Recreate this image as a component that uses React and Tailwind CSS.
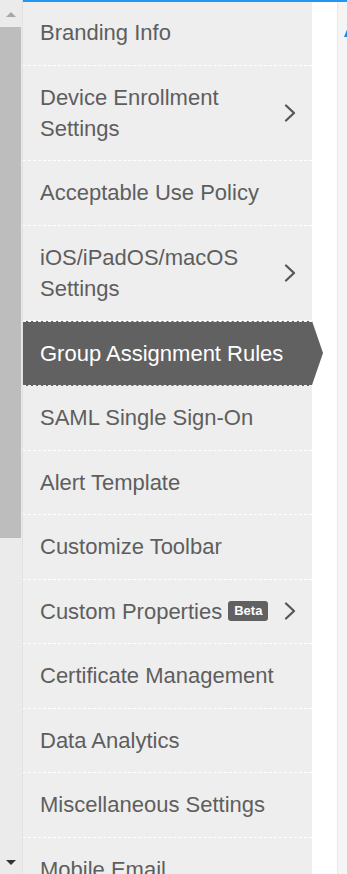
const items = [
  { label: 'Branding Info' },
  { label: ['Device Enrollment', 'Settings'], more: true },
  { label: 'Acceptable Use Policy' },
  { label: ['iOS/iPadOS/macOS', 'Settings'], more: true },
  { label: 'Group Assignment Rules', active: true },
  { label: 'SAML Single Sign-On' },
  { label: 'Alert Template' },
  { label: 'Customize Toolbar' },
  { label: 'Custom Properties', beta: true, more: true },
  { label: 'Certificate Management' },
  { label: 'Data Analytics' },
  { label: 'Miscellaneous Settings' },
  { label: 'Mobile Email' },
];

function Chevron() {
  return (
    <svg width="12" height="18" viewBox="0 0 12 18" className="shrink-0">
      <polyline points="2,1.5 10,9 2,16.5" fill="none" stroke="#555" strokeWidth="2.2" strokeLinecap="round" strokeLinejoin="round" />
    </svg>
  );
}

function MenuRow({ item }) {
  const lines = Array.isArray(item.label) ? item.label : [item.label];
  if (item.active) {
    return (
      <div className="relative flex items-center h-[65px] bg-[#616161] text-white pl-[17px] pr-4 leading-[31px] border-y border-dashed border-[#f4f4f4]">
        <span>{item.label}</span>
        <span className="absolute right-[-11px] top-[-1px] w-0 h-0 border-y-[32.5px] border-y-transparent border-l-[11px] border-l-[#616161]" />
      </div>
    );
  }
  return (
    <div className="flex items-center justify-between pl-[17px] pr-[16px] py-[16.25px] leading-[31px] border-b border-dashed border-white text-[#5e5e5e]">
      <div className="flex items-center">
        <div>
          {lines.map(l => <div key={l}>{l}</div>)}
        </div>
        {item.beta && (
          <span className="ml-[6px] px-[6px] rounded-[3px] bg-[#616161] text-white text-[13px] font-bold leading-[20px]">Beta</span>
        )}
      </div>
      {item.more && <Chevron />}
    </div>
  );
}

export default function App() {
  return (
    <div className="relative flex w-[347px] h-[874px] overflow-hidden bg-white text-[22px]" style={{ fontFamily: '"Liberation Sans", Arial, sans-serif' }}>
      {/* scrollbar */}
      <div className="relative w-[23px] shrink-0 bg-[#ebebeb] border-r border-dotted border-[#d8d8d8]">
        <div className="absolute left-[6px] top-[12px] w-0 h-0 border-x-[5px] border-x-transparent border-b-[5px] border-b-[#a8a8a8]" />
        <div className="absolute left-0 top-[27px] w-[21px] h-[511px] bg-[#bdbdbd]" />
        <div className="absolute left-[6px] top-[860px] w-0 h-0 border-x-[5px] border-x-transparent border-t-[5px] border-t-[#333]" />
      </div>
      {/* menu */}
      <div className="w-[289px] shrink-0 bg-[#eeeeee] pt-[1px]">
        {items.map(it => <MenuRow key={String(it.label)} item={it} />)}
      </div>
      {/* content edge */}
      <div className="relative flex-1">
        <div className="absolute left-[25px] top-0 bottom-0 w-[10px] bg-[#f5f5f5] border-l border-dotted border-[#dcdcdc]" />
        <div className="absolute left-[32px] top-[27px] w-0 h-0 border-x-[4px] border-x-transparent border-b-[10px] border-b-[#1e88e5]" />
      </div>
      {/* top accent line */}
      <div className="absolute left-[23px] right-0 top-0 h-[2px] bg-[#2196f3]" />
    </div>
  );
}
